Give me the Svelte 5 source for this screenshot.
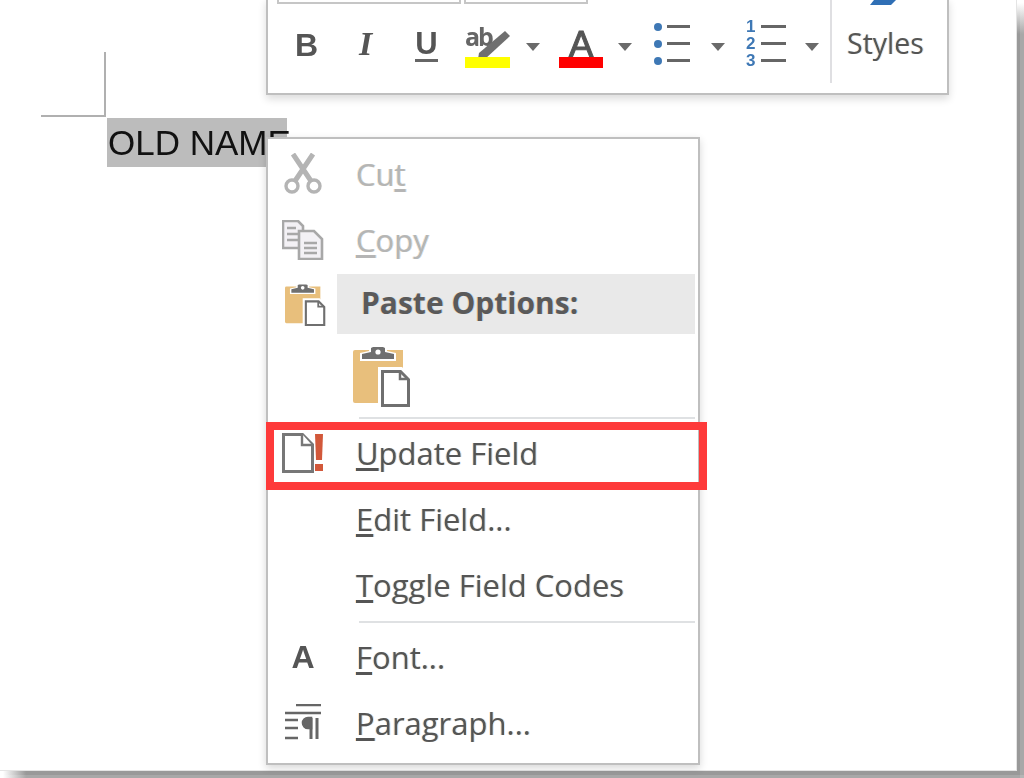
<script lang="ts">
  const groups = [
    [
      { pre: 'Cu', key: 't', post: '', disabled: true, icon: 'cut' },
      { pre: '', key: 'C', post: 'opy', disabled: true, icon: 'copy' }
    ],
    [
      { pre: '', key: 'U', post: 'pdate Field', icon: 'update' },
      { pre: '', key: 'E', post: 'dit Field...', icon: '' },
      { pre: '', key: 'T', post: 'oggle Field Codes', icon: '' }
    ],
    [
      { pre: '', key: 'F', post: 'ont...', icon: 'font' },
      { pre: '', key: 'P', post: 'aragraph...', icon: 'para' }
    ]
  ];
</script>

{#snippet clipboard()}
  <path d="M2 5h48v53H2a2 2 0 0 1-2-2V7a2 2 0 0 1 2-2z" fill="#e8bf7c" />
  <path d="M7 16V8l9-2V2l3-2h12l3 2v4l9 2v8z" fill="#fff" />
  <path d="M9 14V9l9-2V3l2-1h10l2 1v4l9 2v5z" fill="#6f6f6f" />
  <circle cx="25" cy="7" r="2.6" fill="#fff" />
  <path d="M25 22h24l9 9v31H25z" fill="#fff" />
  <path d="M29.5 26.500h18l8 8v26h-26z" fill="#fff" stroke="#6f6f6f" stroke-width="3" />
  <path d="M47 26v8h8" fill="none" stroke="#6f6f6f" stroke-width="2.500" />
{/snippet}

{#snippet menuRow(row)}
  <div class="row" class:disabled={row.disabled}>
    <span class="icon">
      {#if row.icon === 'cut'}
        <svg width="42" height="42" viewBox="0 0 42 42" fill="none" stroke="#b4b4b4">
          <circle cx="10" cy="33" r="6" stroke-width="3.400" />
          <circle cx="32" cy="33" r="6" stroke-width="3.400" />
          <path d="M13 28 31 1M29 28 11 1" stroke-width="5" />
        </svg>
      {:else if row.icon === 'copy'}
        <svg width="42" height="40" viewBox="0 0 42 40" fill="#f3f1f5" stroke="#a8a8a8" stroke-width="2.600">
          <path d="M1 1h15l5 5v22H1z" />
          <path d="M5 8h9M5 14h11M5 20h11" />
          <path d="M17 11h15l8 8v20H17z" />
          <path d="M22 23h13M22 28h13M22 33h13" />
        </svg>
      {:else if row.icon === 'update'}
        <svg width="42" height="40" viewBox="0 0 42 40">
          <path d="M1.500 1.500h19l10 10v27h-29z" fill="#fff" stroke="#777" stroke-width="3" />
          <path d="M20 1v11h10" fill="#fff" stroke="#777" stroke-width="2.400" />
          <path d="M33 1h8l-1 26h-6z" fill="#d2583a" />
          <rect x="33" y="31" width="8" height="7" fill="#d2583a" />
        </svg>
      {:else if row.icon === 'font'}
        <span class="font-a">A</span>
      {:else if row.icon === 'para'}
        <svg width="38" height="38" viewBox="0 0 38 38" fill="none" stroke="#666" stroke-width="2.600">
          <path d="M12 1h25M1 9h36M1 16h13M1 24h13M1 34h13" />
          <path d="M27 14v21M33 14v21" stroke-width="3" />
          <path d="M27 14h-3a5 5 0 0 0 0 10h3z" fill="#666" />
        </svg>
      {/if}
    </span>
    <span class="label">{row.pre}<u>{row.key}</u>{row.post}</span>
  </div>
{/snippet}

<div class="shot">
  <div class="sheet">
    <div class="crop"></div>
    <div class="selection">OLD NAME</div>

    <div class="ribbon">
      <div class="combos">
        <span class="combo first"></span>
        <span class="combo second"></span>
      </div>
      <div class="tools">
        <span class="tool t-b">B</span>
        <span class="tool t-i">I</span>
        <span class="tool t-u">U</span>
        <span class="swatch t-hl">
          <span class="ab">ab</span>
          <svg class="pen" width="36" height="32" viewBox="0 0 36 32">
            <path d="M31 2 36 7 11 30H4l1-6z" fill="#6f6f6f" />
          </svg>
          <span class="bar yellow"></span>
        </span>
        <span class="arrow a1"></span>
        <span class="swatch t-fc">
          <span class="fc-a">A</span>
          <span class="bar red"></span>
        </span>
        <span class="arrow a2"></span>
        <span class="list t-bul">
          {#each [0, 1, 2] as n (n)}
            <span class="list-row"><i class="dot"></i><i class="line"></i></span>
          {/each}
        </span>
        <span class="arrow a3"></span>
        <span class="list t-num">
          {#each [1, 2, 3] as n}
            <span class="list-row"><b class="num">{n}</b><i class="line"></i></span>
          {/each}
        </span>
        <span class="arrow a4"></span>
        <span class="sep"></span>
        <div class="styles">
          <svg class="brush" width="28" height="6" viewBox="0 0 28 6">
            <path d="M6 0h22l-5 5H2z" fill="#2f6fb5" />
          </svg>
          <span class="styles-label">Styles</span>
        </div>
      </div>
    </div>

    <div class="menu">
      {#each groups[0] as row}
        {@render menuRow(row)}
      {/each}
      <div class="paste-head">
        <span class="icon">
          <svg class="paste-small" width="41" height="43" viewBox="0 0 58 62" preserveAspectRatio="none">{@render clipboard()}</svg>
        </span>
        <span class="paste-title">Paste Options:</span>
      </div>
      <div class="paste-row">
        <svg width="58" height="62" viewBox="0 0 58 62">{@render clipboard()}</svg>
      </div>
      <hr />
      {#each groups[1] as row}
        {@render menuRow(row)}
      {/each}
      <hr />
      {#each groups[2] as row}
        {@render menuRow(row)}
      {/each}
    </div>

    <div class="callout"></div>
  </div>
</div>

<style>
  :global(body) {
    margin: 0;
    background: #fff;
  }

  .shot {
    width: 1024px;
    height: 778px;
    overflow: hidden;
    position: relative;
    font-family: "Open Sans", "Noto Sans", sans-serif;
    background:
      linear-gradient(rgba(255, 255, 255, 0.15), rgba(255, 255, 255, 0.15)) right / 4px 100% no-repeat,
      linear-gradient(rgba(255, 255, 255, 0.15), rgba(255, 255, 255, 0.15)) bottom / 100% 3px no-repeat,
      linear-gradient(#fff 3px, #999 34px) right / 8px 100% no-repeat,
      linear-gradient(to right, #fff 3px, #999 26px) bottom / 100% 8px no-repeat,
      #fff;
  }

  .sheet {
    width: 1016px;
    height: 770px;
    background: #fff;
    box-shadow: 0 0 0 1px #e4e4e4;
    box-sizing: border-box;
    padding: 52px 0 0 41px;
    position: relative;
    filter: blur(0.75px);
  }

  .crop {
    width: 63px;
    height: 63px;
    border-right: 2px solid #b0b0b0;
    border-bottom: 2px solid #b0b0b0;
  }

  .selection {
    margin: 1px 0 0 66px;
    width: 180px;
    height: 49px;
    padding-left: 1px;
    box-sizing: border-box;
    background: #bcbcbc;
    color: #111;
    font: 35px/50px "Liberation Sans", Arial, sans-serif;
    white-space: nowrap;
  }

  /* ribbon fragment, cut off by the top of the picture */
  .ribbon {
    position: absolute;
    left: 266px;
    top: -2px;
    width: 683px;
    height: 97px;
    box-sizing: border-box;
    background: #fff;
    border: 2px solid #bfbfbf;
    box-shadow: 0 4px 8px rgba(0, 0, 0, 0.14);
  }

  .combos {
    display: flex;
    height: 4px;
    padding-left: 9px;
    gap: 3px;
  }

  .combo {
    height: 4px;
    box-sizing: border-box;
    border: 2px solid #c6c6c6;
    border-top: 0;
  }

  .combo.first { width: 184px; }
  .combo.second { width: 124px; }

  .tools {
    display: flex;
    align-items: flex-start;
    height: 87px;
  }

  .tool {
    color: #555;
    line-height: 30px;
    text-align: center;
    margin-top: 25px;
  }

  .t-b {
    margin-left: 27px;
    width: 20px;
    margin-top: 26px;
    font: bold 32px/30px "Liberation Sans", sans-serif;
  }

  .t-i {
    margin-left: 41px;
    width: 19px;
    font: italic bold 34px/30px "Liberation Serif", serif;
  }

  .t-u {
    margin-left: 40px;
    width: 23px;
    font: bold 31px/30px "Liberation Sans", sans-serif;
    border-bottom: 3px solid #666;
  }

  .swatch {
    position: relative;
    height: 41px;
    margin-top: 23px;
    display: block;
  }

  .t-hl { margin-left: 27px; width: 45px; }
  .t-fc { margin-left: 19px; width: 44px; text-align: center; }

  .bar {
    position: absolute;
    left: 0;
    right: 0;
    bottom: 0;
    height: 11px;
  }

  .yellow { background: #ffff00; }
  .red { background: #ff0000; }

  .ab {
    position: absolute;
    left: 0;
    top: -4px;
    font: bold 25px/26px "Open Sans", sans-serif;
    letter-spacing: -2px;
    color: #666;
  }

  .pen {
    position: absolute;
    left: 9px;
    top: 2px;
  }

  .fc-a {
    display: block;
    font: 37px/36px "Liberation Sans", sans-serif;
    color: #555;
    -webkit-text-stroke: 1px #555;
  }

  .arrow {
    width: 0;
    height: 0;
    margin-top: 39px;
    border: 7px solid transparent;
    border-top: 8px solid #6a6a6a;
    border-bottom: 0;
  }

  .a1 { margin-left: 16px; }
  .a2 { margin-left: 15px; }
  .a3 { margin-left: 21px; }
  .a4 { margin-left: 19px; }

  .list {
    margin-top: 17px;
    display: flex;
    flex-direction: column;
    gap: 6px;
  }

  .t-bul { margin-left: 22px; width: 36px; }
  .t-num { margin-left: 21px; width: 40px; }

  .list-row {
    display: flex;
    align-items: center;
    height: 11px;
    gap: 5px;
  }

  .dot {
    width: 8px;
    height: 8px;
    border-radius: 50%;
    background: #3e78b5;
  }

  .num {
    width: 10px;
    color: #3e78b5;
    font: bold 17px/11px "Liberation Sans", sans-serif;
  }

  .line {
    flex: 1;
    height: 2.500px;
    background: #666;
  }

  .sep {
    width: 2px;
    height: 83px;
    margin: -4px 0 0 11px;
    background: #dfdfe2;
  }

  .styles {
    margin-left: 15px;
    margin-top: -4px;
    display: flex;
    flex-direction: column;
    align-items: flex-start;
  }

  .brush { margin-left: 21px; }

  .styles-label {
    margin-top: 20px;
    font-size: 28.500px;
    line-height: 34px;
    color: #555;
    text-shadow: -1px 0 rgba(255, 170, 60, 0.3), 1px 0 rgba(70, 170, 255, 0.3);
  }

  /* context menu */
  .menu {
    position: absolute;
    left: 266px;
    top: 137px;
    width: 434px;
    height: 628px;
    box-sizing: border-box;
    padding: 2px 3px 0 1px;
    background: #fff;
    border: 2px solid #bfbfbf;
    box-shadow: 0 3px 8px rgba(0, 0, 0, 0.16);
  }

  .row {
    display: flex;
    align-items: center;
    height: 66px;
  }

  .icon {
    flex: none;
    width: 68px;
    display: flex;
    justify-content: center;
    align-items: center;
  }

  .label {
    margin-left: 19px;
    font-size: 31px;
    line-height: 40px;
    color: #555;
    text-shadow: -1px 0 rgba(255, 170, 60, 0.3), 1px 0 rgba(70, 170, 255, 0.3);
  }

  .label u {
    text-decoration-thickness: 2.500px;
    text-underline-offset: 3px;
  }

  .disabled .label {
    color: #b5b5b5;
  }

  .font-a {
    font: bold 32px/36px "Liberation Sans", sans-serif;
    color: #555;
  }

  .paste-head {
    display: flex;
    align-items: center;
    height: 60px;
    margin-top: 1px;
  }

  .paste-small {
    margin-left: 4px;
  }

  .paste-title {
    flex: 1;
    align-self: stretch;
    display: flex;
    align-items: center;
    padding: 0 0 3px 24px;
    background: #e9e9e9;
    font-size: 30px;
    font-weight: 700;
    color: #5a5a5a;
    text-shadow: -1px 0 rgba(255, 170, 60, 0.25), 1px 0 rgba(70, 170, 255, 0.25);
  }

  .paste-row {
    height: 80px;
    padding: 4px 0 0 84px;
    box-sizing: border-box;
    display: flex;
    align-items: center;
  }

  hr {
    margin: 3px 0 1px 90px;
    height: 2px;
    border: 0;
    background: #dfe1e3;
  }

  .callout {
    position: absolute;
    left: 266px;
    top: 422px;
    width: 441px;
    height: 68px;
    box-sizing: border-box;
    border: 8px solid #fe3a3a;
  }
</style>
